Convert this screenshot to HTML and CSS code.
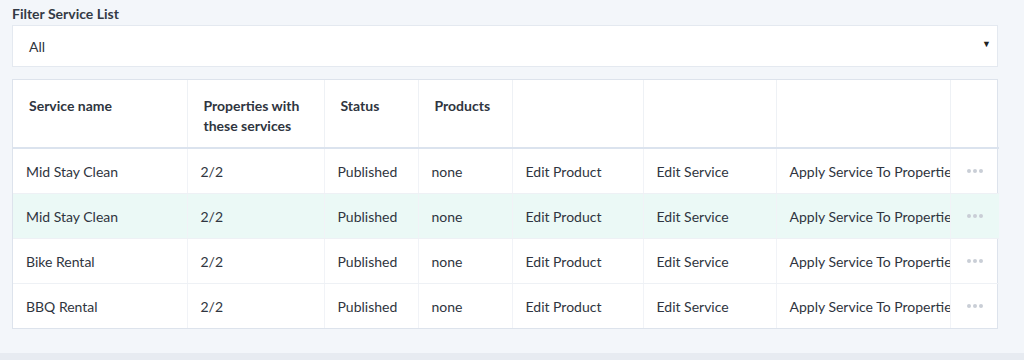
FILE: index.html
```html
<!DOCTYPE html>
<html lang="en">
<head>
    <meta charset="UTF-8">
    <meta name="viewport" content="width=device-width, initial-scale=1.0">
    <title>Services</title>
    <link rel="stylesheet" href="styles.css">
</head>
<body>
    <div class="page">
        <label class="filter-label" for="filter">Filter Service List</label>
        <div class="select">
            <span>All</span>
            <span class="caret">&#9660;</span>
        </div>

        <div class="table-card">
            <table class="services">
                <colgroup>
                    <col style="width:174px">
                    <col style="width:137px">
                    <col style="width:94px">
                    <col style="width:94px">
                    <col style="width:131px">
                    <col style="width:133px">
                    <col style="width:174px">
                    <col style="width:49px">
                </colgroup>
                <thead>
                    <tr>
                        <th>Service name</th>
                        <th>Properties with these services</th>
                        <th>Status</th>
                        <th>Products</th>
                        <th></th>
                        <th></th>
                        <th></th>
                        <th></th>
                    </tr>
                </thead>
                <tbody>
                    <tr>
                        <td>Mid Stay Clean</td>
                        <td>2/2</td>
                        <td>Published</td>
                        <td>none</td>
                        <td>Edit Product</td>
                        <td>Edit Service</td>
                        <td>Apply Service To Properties</td>
                        <td><span class="dots"><i></i><i></i><i></i></span></td>
                    </tr>
                    <tr class="hover">
                        <td>Mid Stay Clean</td>
                        <td>2/2</td>
                        <td>Published</td>
                        <td>none</td>
                        <td>Edit Product</td>
                        <td>Edit Service</td>
                        <td>Apply Service To Properties</td>
                        <td><span class="dots"><i></i><i></i><i></i></span></td>
                    </tr>
                    <tr>
                        <td>Bike Rental</td>
                        <td>2/2</td>
                        <td>Published</td>
                        <td>none</td>
                        <td>Edit Product</td>
                        <td>Edit Service</td>
                        <td>Apply Service To Properties</td>
                        <td><span class="dots"><i></i><i></i><i></i></span></td>
                    </tr>
                    <tr>
                        <td>BBQ Rental</td>
                        <td>2/2</td>
                        <td>Published</td>
                        <td>none</td>
                        <td>Edit Product</td>
                        <td>Edit Service</td>
                        <td>Apply Service To Properties</td>
                        <td><span class="dots"><i></i><i></i><i></i></span></td>
                    </tr>
                </tbody>
            </table>
        </div>
    </div>
    <div class="footer-edge"></div>
</body>
</html>
```

FILE: styles.css
```css
html, body {
    margin: 0;
    padding: 0;
}
body {
    font-family: Lato, "Liberation Sans", sans-serif;
    font-size: 14px;
    color: #2f3540;
    background: #f3f6fa;
    height: 360px;
    display: flex;
    flex-direction: column;
}
.page {
    flex: 1;
    padding: 5px 26px 0 12px;
}
.filter-label {
    display: block;
    font-weight: 700;
    font-size: 14px;
    line-height: 18px;
    color: #333a45;
    margin-bottom: 2px;
}
.select {
    height: 40px;
    background: #fff;
    border: 1px solid #e4e9f0;
    display: flex;
    align-items: center;
    justify-content: space-between;
    padding: 0 6px 0 16px;
    color: #2f3540;
}
.caret {
    font-size: 9px;
    color: #222;
    margin-top: -6px;
}
.table-card {
    margin-top: 12px;
    background: #fff;
    border: 1px solid #dde3ec;
}
.services {
    width: 100%;
    border-collapse: collapse;
    table-layout: fixed;
}
.services th {
    text-align: left;
    vertical-align: top;
    font-weight: 700;
    line-height: 20px;
    padding: 16px 16px 0;
    height: 51px;
    border-right: 1px solid #eef1f5;
    border-bottom: 2px solid #dbe3ee;
    color: #2f3540;
}
.services td {
    padding: 0 13px;
    height: 44px;
    white-space: nowrap;
    overflow: hidden;
    border-right: 1px solid #f1f3f7;
    border-bottom: 1px solid #eef1f5;
}
.services th:last-child,
.services td:last-child {
    border-right: none;
}
.services tbody tr:last-child td {
    border-bottom: none;
}
.services tr.hover td {
    background: #ebf9f6;
}
.dots {
    display: flex;
    gap: 2px;
    padding-left: 3px;
}
.dots i {
    width: 4px;
    height: 4px;
    border-radius: 50%;
    background: #c9ced6;
}
.footer-edge {
    height: 7px;
    background: #e7ebf1;
}
```
